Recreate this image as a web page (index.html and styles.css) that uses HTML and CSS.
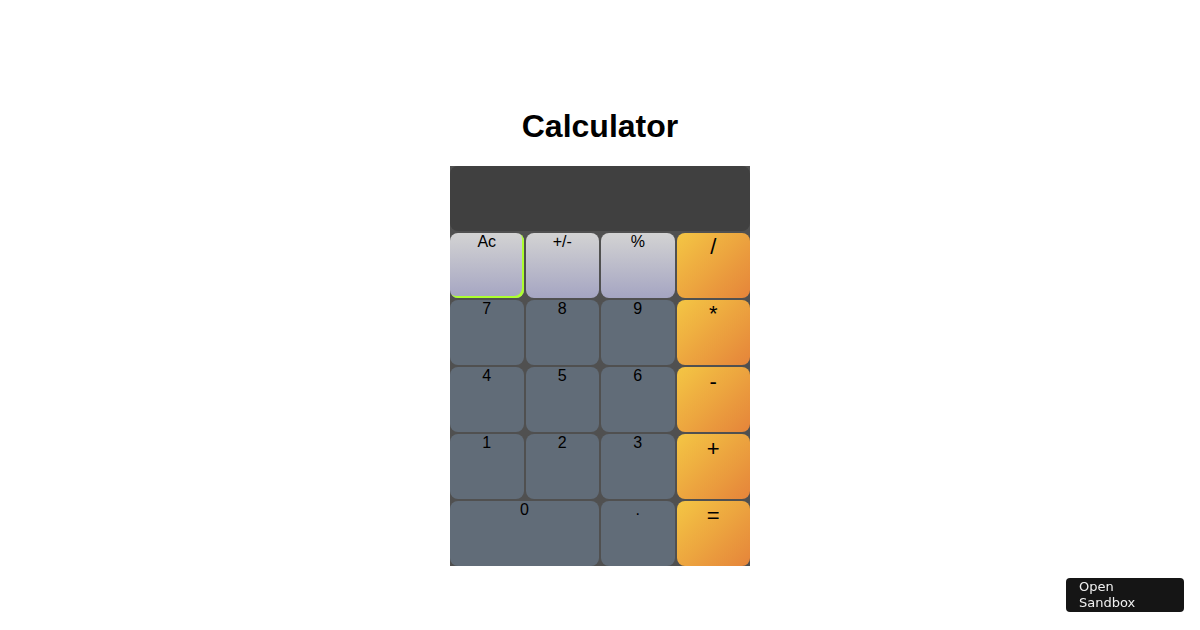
FILE: index.html
```html
<!DOCTYPE html>
<html>
<head>
<meta charset="utf-8">
<link rel="stylesheet" href="styles.css">
</head>
<body>
<main class="page">
  <h1 class="title">Calculator</h1>
  <div class="calc">
    <div class="display"></div>
    <button class="key key-fn key-focus">Ac</button>
    <button class="key key-fn">+/-</button>
    <button class="key key-fn">%</button>
    <button class="key key-op">/</button>
    <button class="key key-num">7</button>
    <button class="key key-num">8</button>
    <button class="key key-num">9</button>
    <button class="key key-op">*</button>
    <button class="key key-num">4</button>
    <button class="key key-num">5</button>
    <button class="key key-num">6</button>
    <button class="key key-op">-</button>
    <button class="key key-num">1</button>
    <button class="key key-num">2</button>
    <button class="key key-num">3</button>
    <button class="key key-op">+</button>
    <button class="key key-num key-wide">0</button>
    <button class="key key-num">.</button>
    <button class="key key-op">=</button>
  </div>
</main>
<a class="sandbox">Open Sandbox</a>
</body>
</html>
```

FILE: styles.css
```css
html, body {
  margin: 0;
  padding: 0;
  background: #ffffff;
}
body {
  font-family: "Liberation Sans", Arial, sans-serif;
}
.page {
  display: flex;
  flex-direction: column;
  align-items: center;
  padding-top: 108px;
}
.title {
  margin: 0 0 21px;
  font-size: 32px;
  line-height: 37px;
  font-weight: bold;
  color: #000;
}
.calc {
  width: 300px;
  height: 400px;
  display: grid;
  grid-template-columns: repeat(4, 1fr);
  grid-template-rows: repeat(6, 1fr);
  gap: 2px;
  background: #505050;
}
.display {
  grid-column: 1 / 5;
  background: #404040;
  border-radius: 8px;
}
.key {
  border: none;
  border-radius: 8px;
  margin: 0;
  padding: 0;
  display: flex;
  justify-content: center;
  align-items: flex-start;
  font-family: "Liberation Sans", Arial, sans-serif;
  font-size: 16px;
  line-height: 18px;
  color: #000;
}
.key-fn {
  background: linear-gradient(to bottom, #d3d3d3, #a5a5c2);
}
.key-focus {
  box-shadow: inset -2px -2px 0 #adff2f;
}
.key-num {
  background: #616c78;
}
.key-op {
  background: linear-gradient(135deg, #f4c644, #e5843a);
  font-size: 22px;
  line-height: 28px;
}
.key-op:nth-child(n+12) {
  line-height: 30px;
}
.key-wide {
  grid-column: span 2;
}
.sandbox {
  position: fixed;
  right: 16px;
  bottom: 18px;
  width: 118px;
  height: 34px;
  box-sizing: border-box;
  padding: 1px 40px 0 13px;
  background: #151515;
  border-radius: 4px;
  color: #f0f0f0;
  font-family: "DejaVu Sans", Verdana, sans-serif;
  font-size: 13px;
  line-height: 16px;
}
```
